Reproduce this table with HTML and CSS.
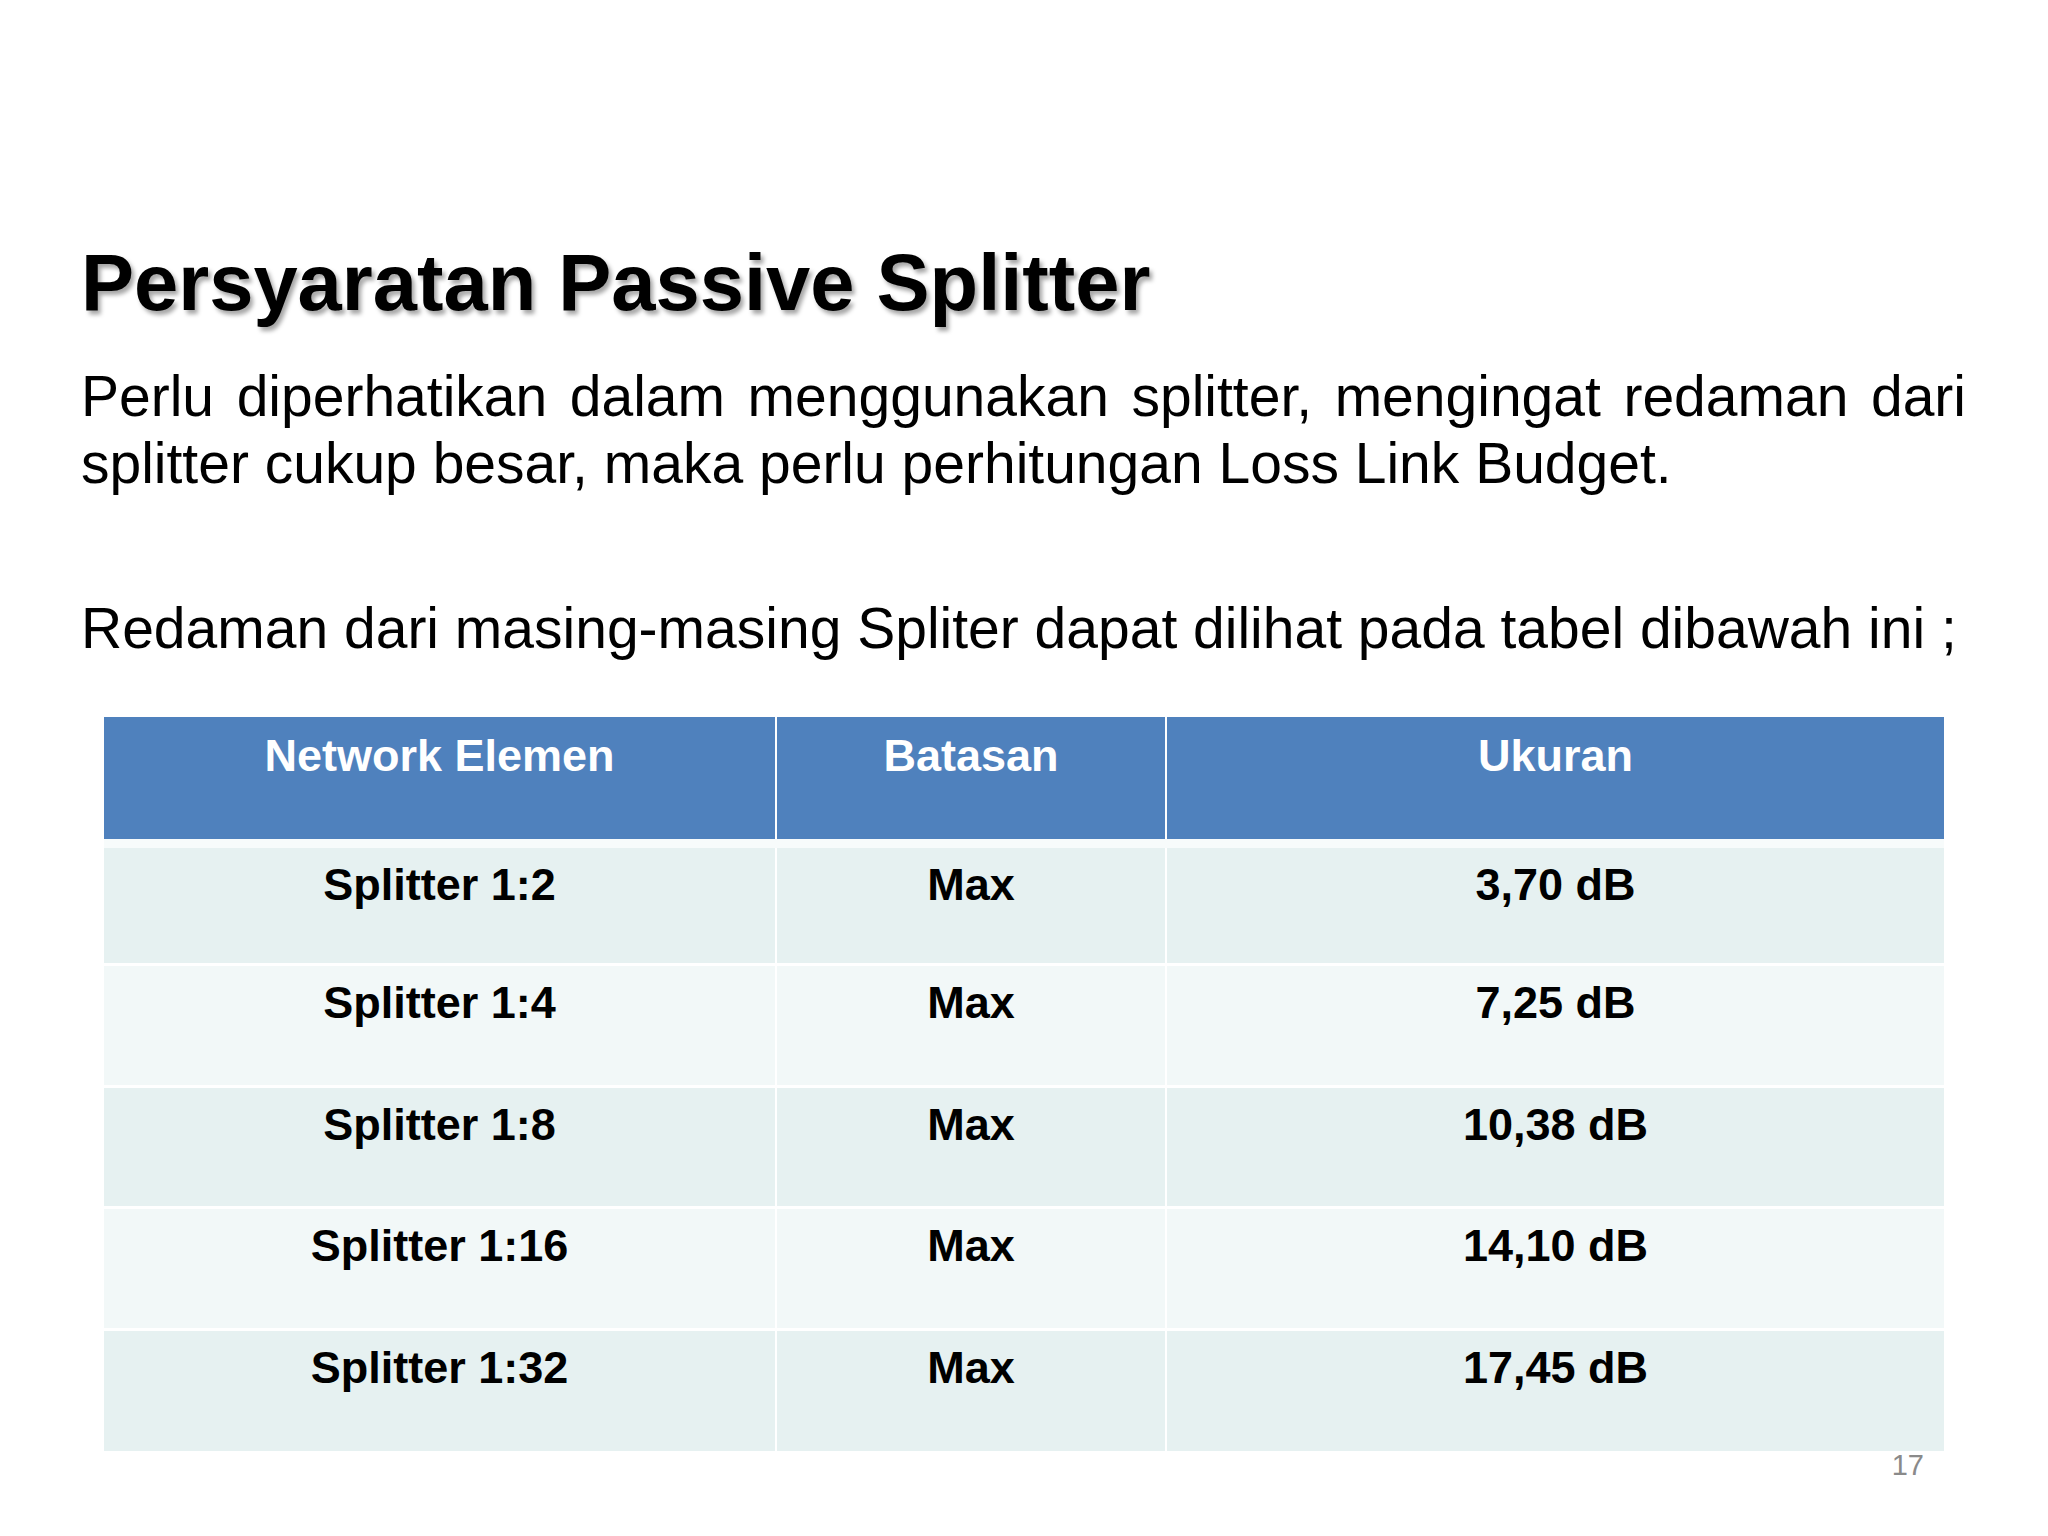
FILE: index.html
```html
<!DOCTYPE html>
<html lang="id">
<head>
<meta charset="utf-8">
<title>Persyaratan Passive Splitter</title>
<link rel="stylesheet" href="styles.css">
</head>
<body>
<main class="slide">
  <h1 class="title">Persyaratan Passive Splitter</h1>
  <p class="body-text justify">Perlu diperhatikan dalam menggunakan splitter, mengingat redaman dari splitter cukup besar, maka perlu perhitungan Loss Link Budget.</p>
  <p class="body-text second">Redaman dari masing-masing Spliter dapat dilihat pada tabel dibawah ini ;</p>
  <table class="spec">
    <colgroup>
      <col class="c1">
      <col class="c2">
      <col class="c3">
    </colgroup>
    <thead>
      <tr>
        <th>Network Elemen</th>
        <th>Batasan</th>
        <th>Ukuran</th>
      </tr>
    </thead>
    <tbody>
      <tr><td>Splitter 1:2</td><td>Max</td><td>3,70 dB</td></tr>
      <tr><td>Splitter 1:4</td><td>Max</td><td>7,25 dB</td></tr>
      <tr><td>Splitter 1:8</td><td>Max</td><td>10,38 dB</td></tr>
      <tr><td>Splitter 1:16</td><td>Max</td><td>14,10 dB</td></tr>
      <tr><td>Splitter 1:32</td><td>Max</td><td>17,45 dB</td></tr>
    </tbody>
  </table>
  <div class="page-num">17</div>
</main>
</body>
</html>
```

FILE: styles.css
```css
html, body {
  margin: 0;
  padding: 0;
  background: #ffffff;
}

body {
  width: 2048px;
  height: 1536px;
  overflow: hidden;
  font-family: "Liberation Sans", Arial, sans-serif;
  color: #000000;
}

.slide {
  padding: 243px 0 0 81px;
  box-sizing: border-box;
  width: 2048px;
  height: 1536px;
}

.title {
  margin: 0;
  font-size: 79.5px;
  line-height: 80px;
  font-weight: 700;
  text-shadow: 3px 4px 4px rgba(0, 0, 0, 0.35);
}

.body-text {
  margin: 40px 0 0 0;
  width: 1885px;
  font-size: 57px;
  line-height: 67px;
}

.justify {
  text-align: justify;
}

.second {
  margin-top: 98px;
}

.spec {
  margin: 55px 0 0 23px;
  width: 1840px;
  border-collapse: collapse;
  table-layout: fixed;
  font-size: 45px;
  line-height: 54px;
  font-weight: 700;
}

.c1 { width: 672px; }
.c2 { width: 390px; }
.c3 { width: 778px; }

.spec th,
.spec td {
  text-align: center;
  vertical-align: top;
  padding: 0;
  border-left: 2px solid #ffffff;
}

.spec th:first-child,
.spec td:first-child {
  border-left: none;
}

.spec th {
  background: #4f81bd;
  color: #ffffff;
  height: 126px;
  padding-top: 12px;
  box-sizing: border-box;
}

.spec thead tr {
  border-bottom: 9px solid #f7fbfb;
}

.spec td {
  height: 121.5px;
  padding-top: 10px;
  box-sizing: border-box;
}

.spec tbody tr + tr {
  border-top: 3px solid #ffffff;
}

.spec tbody tr:nth-child(odd) td {
  background: #e6f1f1;
}

.spec tbody tr:nth-child(even) td {
  background: #f2f8f8;
}

.page-num {
  margin-top: 0;
  width: 1843px;
  text-align: right;
  font-size: 29px;
  line-height: 28px;
  color: #8a8a8a;
}
```
